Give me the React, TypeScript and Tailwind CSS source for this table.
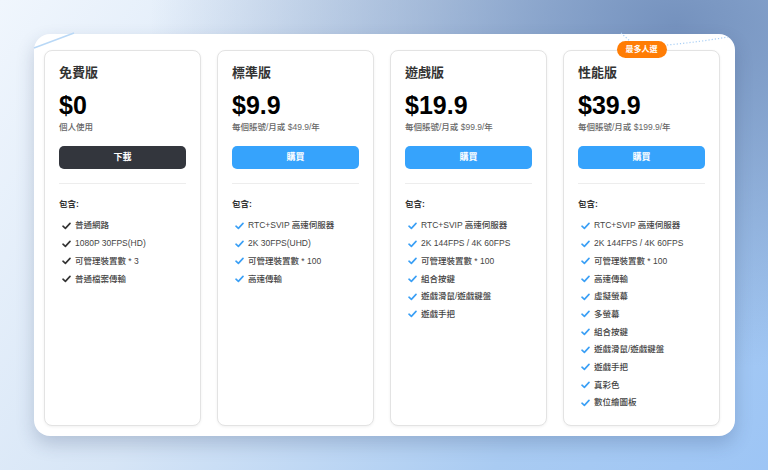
import React from "react";

type Plan = {
  title: string;
  price: string;
  sub: string;
  btn: string;
  dark?: boolean;
  badge?: string;
  features: string[];
};

const plans: Plan[] = [
  {
    title: "免費版",
    price: "$0",
    sub: "個人使用",
    btn: "下載",
    dark: true,
    features: ["普通網路", "1080P 30FPS(HD)", "可管理裝置數 * 3", "普通檔案傳輸"],
  },
  {
    title: "標準版",
    price: "$9.9",
    sub: "每個賬號/月或 $49.9/年",
    btn: "購買",
    features: ["RTC+SVIP 高速伺服器", "2K 30FPS(UHD)", "可管理裝置數 * 100", "高速傳輸"],
  },
  {
    title: "遊戲版",
    price: "$19.9",
    sub: "每個賬號/月或 $99.9/年",
    btn: "購買",
    features: [
      "RTC+SVIP 高速伺服器",
      "2K 144FPS / 4K 60FPS",
      "可管理裝置數 * 100",
      "組合按鍵",
      "遊戲滑鼠/遊戲鍵盤",
      "遊戲手把",
    ],
  },
  {
    title: "性能版",
    price: "$39.9",
    sub: "每個賬號/月或 $199.9/年",
    btn: "購買",
    badge: "最多人選",
    features: [
      "RTC+SVIP 高速伺服器",
      "2K 144FPS / 4K 60FPS",
      "可管理裝置數 * 100",
      "高速傳輸",
      "虛擬螢幕",
      "多螢幕",
      "組合按鍵",
      "遊戲滑鼠/遊戲鍵盤",
      "遊戲手把",
      "真彩色",
      "數位繪圖板",
    ],
  },
];

function Check({ color }: { color: string }) {
  return (
    <svg width="9" height="8" viewBox="0 0 9 8" className="shrink-0">
      <path d="M1 4.2 L3.4 6.4 L8 1.4" fill="none" stroke={color} strokeWidth="1.6" strokeLinecap="round" strokeLinejoin="round" />
    </svg>
  );
}

function Card({ p }: { p: Plan }) {
  return (
    <div className="relative w-[157px] h-[376px] rounded-lg border border-[#e3e3e3] bg-white shadow-[0_1px_3px_rgba(0,0,0,0.06)] px-[14px] pt-[14px]">
      {p.badge && (
        <div className="absolute -top-[10px] left-1/2 -translate-x-1/2 w-[50px] h-[17px] rounded-full bg-[#ff7d05] text-white text-[8px] font-bold flex items-center justify-center leading-none">
          {p.badge}
        </div>
      )}
      <div className="text-[13px] leading-[16px] font-bold text-[#333]">{p.title}</div>
      <div className="mt-[10px] text-[25px] leading-[28px] font-bold text-black">{p.price}</div>
      <div className="mt-[1px] text-[8.5px] leading-[14px] font-medium text-[#666]">{p.sub}</div>
      <div
        className={
          "mt-[12px] h-[23px] rounded-[5px] flex items-center justify-center text-white text-[9px] font-bold " +
          (p.dark ? "bg-[#33363d]" : "bg-[#36a3fc]")
        }
      >
        {p.btn}
      </div>
      <div className="mt-[14px] h-[1px] bg-[#ededed]" />
      <div className="mt-[13px] text-[8.5px] leading-[14px] font-bold text-[#333]">包含:</div>
      <div className="mt-[6px] flex flex-col">
        {p.features.map((f) => (
          <div key={f} className="h-[17.7px] flex items-center gap-[4px] pl-[3px] text-[8.5px] font-medium text-[#444]">
            <Check color={p.dark ? "#333" : "#3a9ff5"} />
            <span>{f}</span>
          </div>
        ))}
      </div>
    </div>
  );
}

export default function App() {
  return (
    <div
      className="w-[768px] h-[470px] overflow-hidden pt-[34px] pl-[34px] bg-[radial-gradient(ellipse_at_88%_5%,#7592be_0%,rgba(117,146,190,0)_55%),linear-gradient(125deg,#f0f6fd_0%,#d6e5f6_40%,#a9cbf2_75%,#9dc5f5_100%)]"
      style={{ fontFamily: '"Liberation Sans","Noto Sans CJK TC",sans-serif' }}
    >
      <div className="relative w-[701px] h-[402px] rounded-[16px] bg-white shadow-[0_8px_18px_rgba(40,60,100,0.22)] pl-[10px] pt-[16px] flex gap-[16px]">
        <svg className="absolute left-0 top-0 overflow-visible" width="701" height="20">
          <path d="M0 14 L40 -1" stroke="#b9d8f6" strokeWidth="1.5" fill="none" />
          <path d="M587 -1 L598 9" stroke="#a9cff5" strokeWidth="1.2" strokeDasharray="1.2 2" fill="none" />
          <path d="M633 11 Q665 8 694 3" stroke="#a9cff5" strokeWidth="1.2" strokeDasharray="1.2 2" fill="none" />
        </svg>
        {plans.map((p) => (
          <Card key={p.title} p={p} />
        ))}
      </div>
    </div>
  );
}
